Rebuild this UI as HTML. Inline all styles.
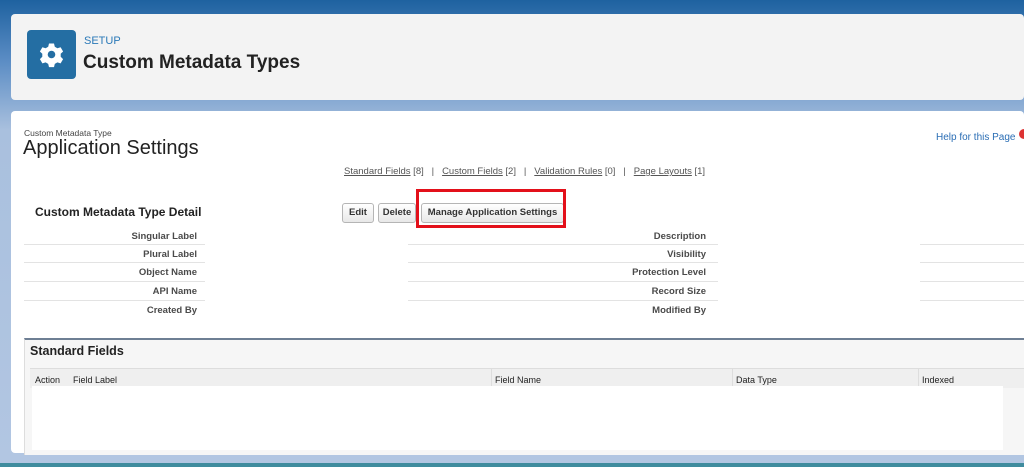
<html><head><style>
body{margin:0;width:1024px;height:467px;overflow:hidden;position:relative;font-family:"Liberation Sans",Arial,sans-serif;background:linear-gradient(#1e62a0 0px,#5a8cc4 60px,#a9c0de 130px,#b2c6e2 467px);}
.a{position:absolute;}
.lbl{position:absolute;font-size:9.5px;font-weight:bold;color:#4a4a4a;text-align:right;}
.ln{position:absolute;height:1px;background:#e3e3e3;}
.btn{position:absolute;height:18px;border:1px solid #b5b5b5;border-radius:3px;background:linear-gradient(#fff,#e8e8e8);font-size:9.5px;font-weight:bold;color:#333;line-height:18px;text-align:center;}
.th{position:absolute;top:375px;font-size:9px;color:#222;}
</style></head><body>
<div class="a" style="left:11px;top:14px;width:1013px;height:86px;background:#f3f3f3;border-radius:4px;"></div>
<div class="a" style="left:27px;top:30px;width:49px;height:49px;background:#246ea3;border-radius:4px;">
<svg width="49" height="49" viewBox="0 0 49 49"><g transform="translate(24.5,24.5)" fill="#fff"><path d="M-2.5-11h5l.8 3.2 2.6 1.5 3.2-1 2.5 4.3-2.4 2.3v3l2.4 2.3-2.5 4.3-3.2-1-2.6 1.5-.8 3.2h-5l-.8-3.2-2.6-1.5-3.2 1-2.5-4.3 2.4-2.3v-3l-2.4-2.3 2.5-4.3 3.2 1 2.6-1.5z"/><circle r="3.8" fill="#246ea3"/></g></svg></div>
<div class="a" style="left:84px;top:35px;font-size:11px;color:#2a79b8;">SETUP</div>
<div class="a" style="left:83px;top:52px;font-size:19px;font-weight:bold;color:#222;">Custom Metadata Types</div>
<div class="a" style="left:11px;top:111px;width:1013px;height:342px;background:#fff;border-radius:4px;"></div>
<div class="a" style="left:24px;top:128px;font-size:8.5px;color:#444;">Custom Metadata Type</div>
<div class="a" style="left:23px;top:137px;font-size:20px;color:#222;">Application Settings</div>
<div class="a" style="left:936px;top:132px;font-size:10px;color:#2a6db4;">Help for this Page</div>
<div class="a" style="left:1019px;top:129px;width:10px;height:10px;border-radius:5px;background:#d33;"></div>
<div class="a" style="left:344px;top:166px;font-size:9.5px;color:#555;white-space:pre;"><u>Standard Fields</u> [8]   |   <u>Custom Fields</u> [2]   |   <u>Validation Rules</u> [0]   |   <u>Page Layouts</u> [1]</div>
<div class="a" style="left:35px;top:205px;font-size:12px;font-weight:bold;color:#222;">Custom Metadata Type Detail</div>
<div class="btn" style="left:342px;top:203px;width:30px;">Edit</div>
<div class="btn" style="left:378px;top:203px;width:36px;">Delete</div>
<div class="btn" style="left:421px;top:203px;width:141px;">Manage Application Settings</div>
<div class="a" style="left:416px;top:189px;width:150px;height:39px;border:3px solid #e3101a;box-sizing:border-box;"></div>
<div class="lbl" style="left:24px;width:173px;top:231px;">Singular Label</div>
<div class="lbl" style="left:24px;width:173px;top:249px;">Plural Label</div>
<div class="lbl" style="left:24px;width:173px;top:267px;">Object Name</div>
<div class="lbl" style="left:24px;width:173px;top:286px;">API Name</div>
<div class="lbl" style="left:24px;width:173px;top:305px;">Created By</div>
<div class="lbl" style="left:500px;width:206px;top:231px;">Description</div>
<div class="lbl" style="left:500px;width:206px;top:249px;">Visibility</div>
<div class="lbl" style="left:500px;width:206px;top:267px;">Protection Level</div>
<div class="lbl" style="left:500px;width:206px;top:286px;">Record Size</div>
<div class="lbl" style="left:500px;width:206px;top:305px;">Modified By</div>
<div class="ln" style="left:24px;width:181px;top:244px"></div><div class="ln" style="left:408px;width:310px;top:244px"></div><div class="ln" style="left:920px;width:104px;top:244px"></div>
<div class="ln" style="left:24px;width:181px;top:262px"></div><div class="ln" style="left:408px;width:310px;top:262px"></div><div class="ln" style="left:920px;width:104px;top:262px"></div>
<div class="ln" style="left:24px;width:181px;top:281px"></div><div class="ln" style="left:408px;width:310px;top:281px"></div><div class="ln" style="left:920px;width:104px;top:281px"></div>
<div class="ln" style="left:24px;width:181px;top:300px"></div><div class="ln" style="left:408px;width:310px;top:300px"></div><div class="ln" style="left:920px;width:104px;top:300px"></div>
<div class="a" style="left:24px;top:338px;width:1000px;height:115px;background:#f6f6f6;border-top:2px solid #6e7f94;border-left:1px solid #ddd;"></div>
<div class="a" style="left:30px;top:344px;font-size:12.5px;font-weight:bold;color:#222;">Standard Fields</div>
<div class="a" style="left:30px;top:368px;width:994px;height:19px;background:#efefef;border-top:1px solid #ddd;"></div>
<div class="a" style="left:491px;top:369px;width:1px;height:18px;background:#ddd"></div>
<div class="a" style="left:732px;top:369px;width:1px;height:18px;background:#ddd"></div>
<div class="a" style="left:918px;top:369px;width:1px;height:18px;background:#ddd"></div>
<div class="th" style="left:35px;">Action</div><div class="th" style="left:73px;">Field Label</div><div class="th" style="left:495px;">Field Name</div><div class="th" style="left:736px;">Data Type</div><div class="th" style="left:922px;">Indexed</div>
<div class="a" style="left:32px;top:386px;width:971px;height:64px;background:#fff;"></div>
<div class="a" style="left:0;top:463px;width:1024px;height:4px;background:#3f8c9e;"></div>
</body></html>
